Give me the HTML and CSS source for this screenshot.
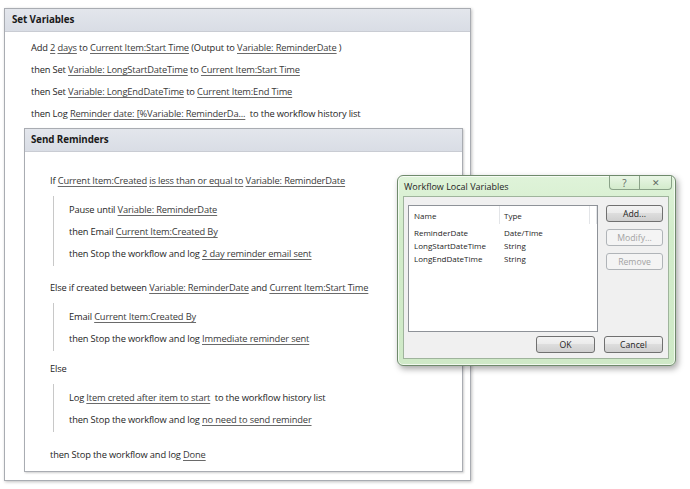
FILE: index.html
```html
<!DOCTYPE html>
<html>
<head>
<meta charset="utf-8">
<link rel="stylesheet" href="styles.css">
</head>
<body>
<div class="panel outer">
  <div class="phead">Set Variables</div>
  <div class="pbody first">
    <div class="row">Add <u>2</u> <u>days</u> to <u>Current Item:Start Time</u> (Output to <u>Variable: ReminderDate</u> )</div>
    <div class="row">then Set <u>Variable: LongStartDateTime</u> to <u>Current Item:Start Time</u></div>
    <div class="row">then Set <u>Variable: LongEndDateTime</u> to <u>Current Item:End Time</u></div>
    <div class="row">then Log <u>Reminder date: [%Variable: ReminderDa...</u>&nbsp; to the workflow history list</div>
  </div>
  <div class="panel inner">
    <div class="phead">Send Reminders</div>
    <div class="pbody second">
      <div class="row">If <u>Current Item:Created</u> <u>is less than or equal to</u> <u>Variable: ReminderDate</u></div>
      <div class="block">
        <div class="row">Pause until <u>Variable: ReminderDate</u></div>
        <div class="row">then Email <u>Current Item:Created By</u></div>
        <div class="row">then Stop the workflow and log <u>2 day reminder email sent</u></div>
      </div>
      <div class="row">Else if created between <u>Variable: ReminderDate</u> and <u>Current Item:Start Time</u></div>
      <div class="block short">
        <div class="row">Email <u>Current Item:Created By</u></div>
        <div class="row">then Stop the workflow and log <u>Immediate reminder sent</u></div>
      </div>
      <div class="row">Else</div>
      <div class="block last">
        <div class="row">Log <u>Item creted after item to start</u>&nbsp; to the workflow history list</div>
        <div class="row">then Stop the workflow and log <u>no need to send reminder</u></div>
      </div>
      <div class="row">then Stop the workflow and log <u>Done</u></div>
    </div>
  </div>
</div>

<div class="dialog">
  <div class="dtitle">
    <span class="dcaption">Workflow Local Variables</span>
    <div class="capbtns">
      <span class="capbtn help">?</span>
      <span class="capbtn close">&#x2715;</span>
    </div>
  </div>
  <div class="dclient">
    <div class="dmain">
      <div class="listview">
        <div class="lvhead">
          <span class="c1">Name</span>
          <span class="c2">Type</span>
          <span class="c3"></span>
        </div>
        <div class="lvrow"><span class="c1">ReminderDate</span><span class="c2">Date/Time</span></div>
        <div class="lvrow"><span class="c1">LongStartDateTime</span><span class="c2">String</span></div>
        <div class="lvrow"><span class="c1">LongEndDateTime</span><span class="c2">String</span></div>
      </div>
      <div class="sidebtns">
        <span class="btn">Add...</span>
        <span class="btn disabled">Modify...</span>
        <span class="btn disabled">Remove</span>
      </div>
    </div>
    <div class="dfoot">
      <span class="btn">OK</span>
      <span class="btn">Cancel</span>
    </div>
  </div>
</div>
</body>
</html>
```
FILE: styles.css
```css
html, body {
  margin: 0;
  padding: 0;
  background: #ffffff;
}
body {
  width: 690px;
  height: 489px;
  position: relative;
  overflow: hidden;
  font-family: "Open Sans", "Noto Sans", sans-serif;
  font-size: 9.3px;
  letter-spacing: -0.15px;
  color: #1e1e1e;
}
u {
  color: #3a3a3a;
  text-decoration: underline;
  text-decoration-color: #6a6a6a;
  text-underline-offset: 2px;
}
.panel {
  border: 1px solid #a9acb2;
  background: #ffffff;
  box-sizing: border-box;
}
.outer {
  margin: 8px 0 0 4px;
  width: 467px;
  height: 473px;
  box-shadow: 1px 1px 3px rgba(0,0,0,0.25);
}
.phead {
  height: 22px;
  line-height: 22px;
  padding-left: 7px;
  font-weight: bold;
  font-size: 9.8px;
  letter-spacing: -0.1px;
  color: #1a1a1a;
  background: linear-gradient(#e3e6ec, #d9dde5);
  border-bottom: 1px solid #c9ccd3;
}
.pbody.first {
  padding: 5px 0 0 26px;
}
.row {
  height: 22px;
  line-height: 22px;
  white-space: nowrap;
}
.inner {
  margin: 3px 0 0 19px;
  width: 439px;
  height: 344px;
  box-shadow: 1px 1px 2px rgba(0,0,0,0.2);
}
.inner .phead {
  padding-left: 6px;
}
.pbody.second {
  padding: 18px 0 0 25px;
}
.block {
  margin: 4px 0 11px 3px;
  border-left: 1px solid #c8c8c8;
  padding: 3px 0 1px 15px;
}
.block.short {
  margin-bottom: 7px;
}
.block.last {
  margin-bottom: 12px;
}

/* dialog */
.dialog {
  position: absolute;
  left: 397px;
  top: 175px;
  width: 279px;
  height: 191px;
  box-sizing: border-box;
  border: 1px solid #6f8a6c;
  border-radius: 6px;
  background: linear-gradient(#dff3d9, #d2ecca 30%, #cfe9c7);
  box-shadow: 2px 3px 6px rgba(0,0,0,0.35), inset 0 0 0 1px rgba(255,255,255,0.7);
  display: flex;
  flex-direction: column;
  letter-spacing: 0;
}
.dtitle {
  height: 20px;
  display: flex;
  align-items: flex-start;
  justify-content: space-between;
  padding-left: 6px;
}
.dcaption {
  line-height: 21px;
  font-size: 9px;
  color: #1e1e1e;
}
.capbtns {
  display: flex;
  margin-right: 3px;
  border: 1px solid #8aa288;
  border-top: none;
  border-radius: 0 0 4px 4px;
  height: 13px;
  background: linear-gradient(#e9f6e5, #d3ebcc);
}
.capbtn {
  display: flex;
  align-items: center;
  justify-content: center;
  font-size: 10px;
  color: #606860;
  line-height: 12px;
}
.capbtn.help {
  width: 29px;
  border-right: 1px solid #8aa288;
}
.capbtn.close {
  width: 31px;
  font-size: 9px;
}
.dclient {
  flex: 1;
  margin: 0 6px 6px 5px;
  background: #f0f0f0;
  border: 1px solid #9fb49c;
  display: flex;
  flex-direction: column;
  font-size: 8px;
}
.dmain {
  display: flex;
  padding: 8px 0 0 4px;
}
.listview {
  width: 190px;
  height: 127px;
  box-sizing: border-box;
  border: 1px solid #8e9298;
  background: #fff;
}
.lvhead {
  display: flex;
  height: 18px;
  line-height: 19px;
  margin-bottom: 2px;
}
.lvhead span {
  border-right: 1px solid #e3e5e8;
  box-sizing: border-box;
}
.lvrow {
  display: flex;
  height: 13px;
  line-height: 13px;
}
.c1 {
  width: 91px;
  padding-left: 5px;
  box-sizing: border-box;
}
.c2 {
  width: 90px;
  padding-left: 4px;
  box-sizing: border-box;
}
.c3 {
  flex: 1;
}
.sidebtns {
  display: flex;
  flex-direction: column;
  gap: 7px;
  margin-left: 8px;
}
.btn {
  display: flex;
  align-items: center;
  justify-content: center;
  width: 57px;
  height: 17px;
  box-sizing: border-box;
  border: 1px solid #707070;
  border-radius: 3px;
  background: linear-gradient(#f3f3f3 0%, #ebebeb 45%, #dddddd 50%, #cfcfcf 100%);
  color: #1e1e1e;
  font-size: 8.7px;
}
.btn.disabled {
  border-color: #b0b4b8;
  background: #f4f4f4;
  color: #a3a3a3;
}
.dfoot {
  display: flex;
  justify-content: flex-end;
  gap: 9px;
  padding: 4px 5px 0 0;
}
.dfoot .btn {
  width: 59px;
}
```
